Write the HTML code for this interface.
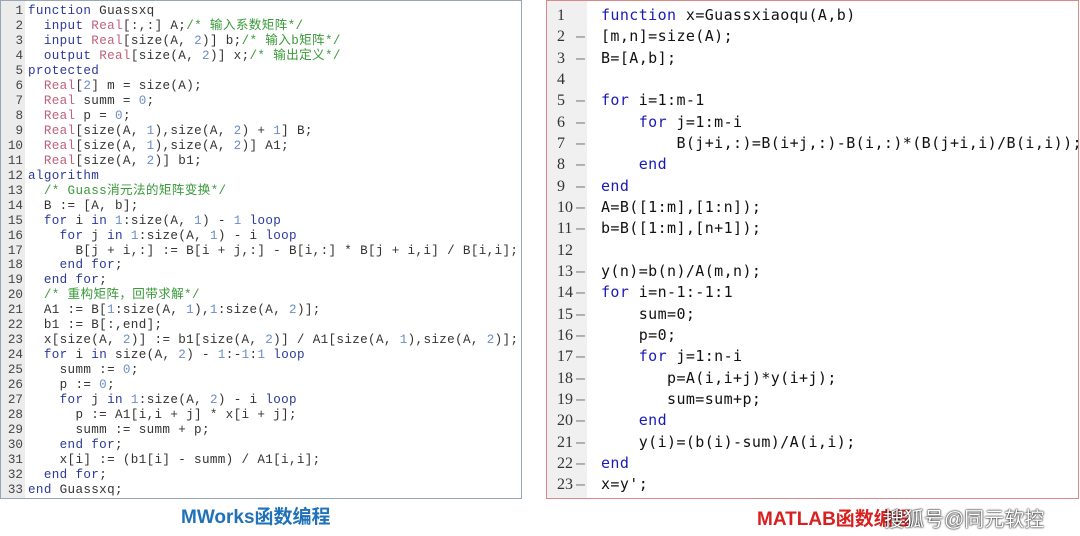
<!DOCTYPE html>
<html><head><meta charset="utf-8"><style>
body{margin:0;width:1080px;height:536px;background:#fff;position:relative;overflow:hidden}
.lp{position:absolute;left:0;top:0;width:520px;height:497px;border:1px solid #9aa6b4;background:#fff}
.lg{position:absolute;left:0;top:0;width:24px;height:100%;background:#ececec}
.lc{position:absolute;left:0;top:3px;font-family:"Liberation Mono","Noto Sans CJK SC",monospace;font-size:12.6px;letter-spacing:0.35px;line-height:14.97px;color:#333;white-space:pre}
.lc .n{display:inline-block;width:22px;text-align:right;color:#444;letter-spacing:0;margin-right:5px}
.k{color:#2b3a9a}.t{color:#c0607a}.c{color:#3a9a3a}.d{color:#6a8ec8}
.rp{position:absolute;left:546px;top:0;width:531px;height:497px;border:1px solid #d88;background:#fff}
.rg{position:absolute;left:0;top:0;width:40px;height:100%;background:#f0f0f0}
.rl{position:absolute;left:0;height:21px;width:531px;font-family:"DejaVu Sans Mono",monospace;font-size:15px;letter-spacing:0.4px;line-height:21px;color:#111;white-space:pre}
.rl .n{position:absolute;left:10px;top:0;font-family:"Liberation Serif",serif;font-size:16px;color:#333;letter-spacing:0}
.rl .m{position:absolute;left:29px;top:0;color:#777}
.rl .x{position:absolute;left:54px;top:0}
.rk{color:#1a1ab8}
.cap{position:absolute;font-family:"Liberation Sans","Noto Sans CJK SC",sans-serif;font-weight:bold;font-size:19px}
</style></head><body>
<div class="lp"><div class="lg"></div><div class="lc"><span class="n">1</span><span class="k">function</span> Guassxq
<span class="n">2</span>  <span class="k">input</span> <span class="t">Real</span>[:,:] A;<span class="c">/* 输入系数矩阵*/</span>
<span class="n">3</span>  <span class="k">input</span> <span class="t">Real</span>[size(A, <span class="d">2</span>)] b;<span class="c">/* 输入b矩阵*/</span>
<span class="n">4</span>  <span class="k">output</span> <span class="t">Real</span>[size(A, <span class="d">2</span>)] x;<span class="c">/* 输出定义*/</span>
<span class="n">5</span><span class="k">protected</span>
<span class="n">6</span>  <span class="t">Real</span>[<span class="d">2</span>] m = size(A);
<span class="n">7</span>  <span class="t">Real</span> summ = <span class="d">0</span>;
<span class="n">8</span>  <span class="t">Real</span> p = <span class="d">0</span>;
<span class="n">9</span>  <span class="t">Real</span>[size(A, <span class="d">1</span>),size(A, <span class="d">2</span>) + <span class="d">1</span>] B;
<span class="n">10</span>  <span class="t">Real</span>[size(A, <span class="d">1</span>),size(A, <span class="d">2</span>)] A1;
<span class="n">11</span>  <span class="t">Real</span>[size(A, <span class="d">2</span>)] b1;
<span class="n">12</span><span class="k">algorithm</span>
<span class="n">13</span>  <span class="c">/* Guass消元法的矩阵变换*/</span>
<span class="n">14</span>  B := [A, b];
<span class="n">15</span>  <span class="k">for</span> i <span class="k">in</span> <span class="d">1</span>:size(A, <span class="d">1</span>) - <span class="d">1</span> <span class="k">loop</span>
<span class="n">16</span>    <span class="k">for</span> j <span class="k">in</span> <span class="d">1</span>:size(A, <span class="d">1</span>) - i <span class="k">loop</span>
<span class="n">17</span>      B[j + i,:] := B[i + j,:] - B[i,:] * B[j + i,i] / B[i,i];
<span class="n">18</span>    <span class="k">end for</span>;
<span class="n">19</span>  <span class="k">end for</span>;
<span class="n">20</span>  <span class="c">/* 重构矩阵，回带求解*/</span>
<span class="n">21</span>  A1 := B[<span class="d">1</span>:size(A, <span class="d">1</span>),<span class="d">1</span>:size(A, <span class="d">2</span>)];
<span class="n">22</span>  b1 := B[:,end];
<span class="n">23</span>  x[size(A, <span class="d">2</span>)] := b1[size(A, <span class="d">2</span>)] / A1[size(A, <span class="d">1</span>),size(A, <span class="d">2</span>)];
<span class="n">24</span>  <span class="k">for</span> i <span class="k">in</span> size(A, <span class="d">2</span>) - <span class="d">1</span>:-<span class="d">1</span>:<span class="d">1</span> <span class="k">loop</span>
<span class="n">25</span>    summ := <span class="d">0</span>;
<span class="n">26</span>    p := <span class="d">0</span>;
<span class="n">27</span>    <span class="k">for</span> j <span class="k">in</span> <span class="d">1</span>:size(A, <span class="d">2</span>) - i <span class="k">loop</span>
<span class="n">28</span>      p := A1[i,i + j] * x[i + j];
<span class="n">29</span>      summ := summ + p;
<span class="n">30</span>    <span class="k">end for</span>;
<span class="n">31</span>    x[i] := (b1[i] - summ) / A1[i,i];
<span class="n">32</span>  <span class="k">end for</span>;
<span class="n">33</span><span class="k">end</span> Guassxq;</div></div>
<div class="rp"><div class="rg"></div>
<div class="rl" style="top:4px"><span class="n">1</span><span class="x"><span class="rk">function</span> x=Guassxiaoqu(A,b)</span></div>
<div class="rl" style="top:25px"><span class="n">2</span><span class="m">–</span><span class="x">[m,n]=size(A);</span></div>
<div class="rl" style="top:47px"><span class="n">3</span><span class="m">–</span><span class="x">B=[A,b];</span></div>
<div class="rl" style="top:68px"><span class="n">4</span></div>
<div class="rl" style="top:89px"><span class="n">5</span><span class="m">–</span><span class="x"><span class="rk">for</span> i=1:m-1</span></div>
<div class="rl" style="top:111px"><span class="n">6</span><span class="m">–</span><span class="x">    <span class="rk">for</span> j=1:m-i</span></div>
<div class="rl" style="top:132px"><span class="n">7</span><span class="m">–</span><span class="x">        B(j+i,:)=B(i+j,:)-B(i,:)*(B(j+i,i)/B(i,i));</span></div>
<div class="rl" style="top:153px"><span class="n">8</span><span class="m">–</span><span class="x">    <span class="rk">end</span></span></div>
<div class="rl" style="top:175px"><span class="n">9</span><span class="m">–</span><span class="x"><span class="rk">end</span></span></div>
<div class="rl" style="top:196px"><span class="n">10</span><span class="m">–</span><span class="x">A=B([1:m],[1:n]);</span></div>
<div class="rl" style="top:217px"><span class="n">11</span><span class="m">–</span><span class="x">b=B([1:m],[n+1]);</span></div>
<div class="rl" style="top:239px"><span class="n">12</span></div>
<div class="rl" style="top:260px"><span class="n">13</span><span class="m">–</span><span class="x">y(n)=b(n)/A(m,n);</span></div>
<div class="rl" style="top:281px"><span class="n">14</span><span class="m">–</span><span class="x"><span class="rk">for</span> i=n-1:-1:1</span></div>
<div class="rl" style="top:303px"><span class="n">15</span><span class="m">–</span><span class="x">    sum=0;</span></div>
<div class="rl" style="top:324px"><span class="n">16</span><span class="m">–</span><span class="x">    p=0;</span></div>
<div class="rl" style="top:345px"><span class="n">17</span><span class="m">–</span><span class="x">    <span class="rk">for</span> j=1:n-i</span></div>
<div class="rl" style="top:367px"><span class="n">18</span><span class="m">–</span><span class="x">       p=A(i,i+j)*y(i+j);</span></div>
<div class="rl" style="top:388px"><span class="n">19</span><span class="m">–</span><span class="x">       sum=sum+p;</span></div>
<div class="rl" style="top:409px"><span class="n">20</span><span class="m">–</span><span class="x">    <span class="rk">end</span></span></div>
<div class="rl" style="top:431px"><span class="n">21</span><span class="m">–</span><span class="x">    y(i)=(b(i)-sum)/A(i,i);</span></div>
<div class="rl" style="top:452px"><span class="n">22</span><span class="m">–</span><span class="x"><span class="rk">end</span></span></div>
<div class="rl" style="top:473px"><span class="n">23</span><span class="m">–</span><span class="x">x=y';</span></div>
</div>
<div class="cap" style="left:181px;top:502px;color:#1f72b8">MWorks函数编程</div>
<div class="cap" style="left:757px;top:504px;color:#d82020">MATLAB函数编程</div>
<div class="cap" style="left:884px;top:503px;color:#fff;font-weight:normal;font-size:20px;text-shadow:0 0 2px #000,0 0 1px #000">搜狐号@同元软控</div>
</body></html>
